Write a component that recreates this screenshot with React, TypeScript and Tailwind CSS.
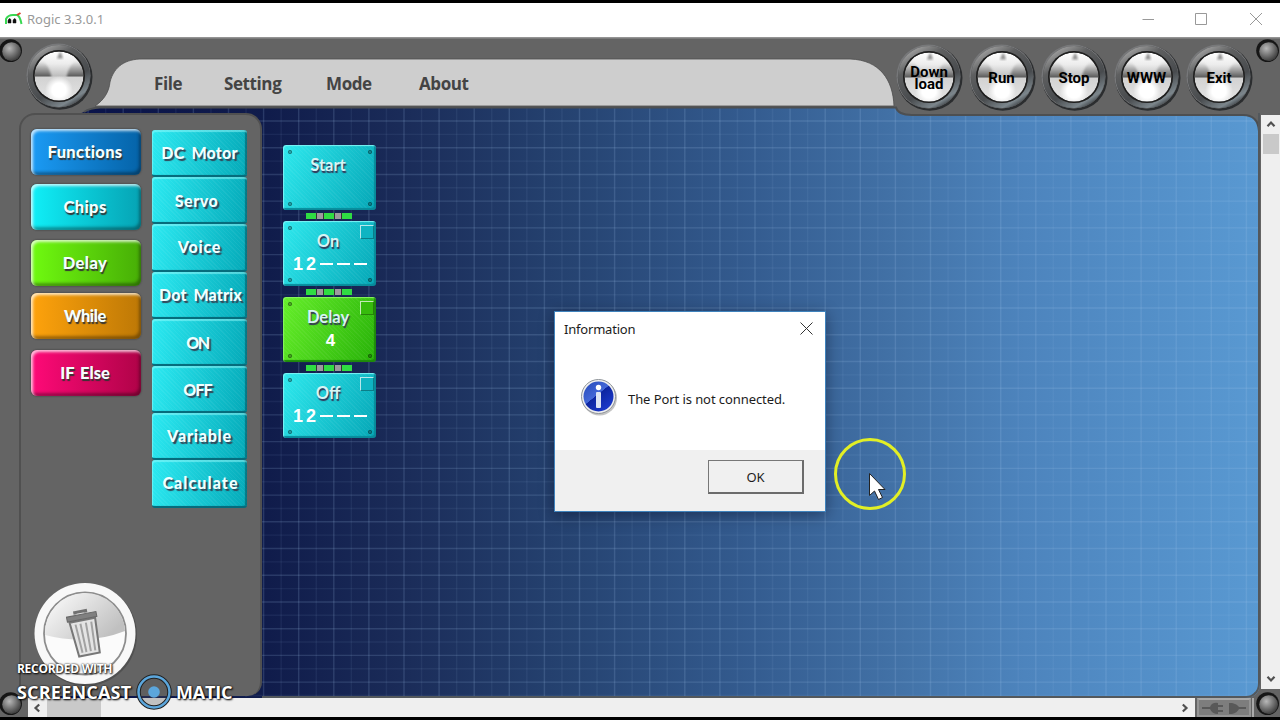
import type { ReactNode } from 'react'
import clsx from 'clsx'

const GROUPS = [
  { label: 'Functions', box: 'from-[#1b9bf5] to-[#0563a8] mt-0', text: 'tracking-[0.3px]' },
  { label: 'Chips', box: 'from-[#10f0f8] to-[#06a3b4] mt-[9px]', text: 'tracking-[0.4px]' },
  { label: 'Delay', box: 'from-[#70fb10] to-[#47ae06] mt-[10px]', text: 'tracking-[0.4px]' },
  { label: 'While', box: 'from-[#ffa30c] to-[#bd7806] mt-[7px]', text: 'tracking-[-0.4px]' },
  { label: 'IF Else', box: 'from-[#ff0a78] to-[#b00348] mt-[11px]', text: 'tracking-[0px] [word-spacing:2px]' },
]

const CHIPS = [
  { label: 'DC Motor', text: 'tracking-[0.2px] [word-spacing:3px]' },
  { label: 'Servo', text: 'tracking-[0.5px] -left-[3px] top-[1px]' },
  { label: 'Voice', text: 'tracking-[0.8px]' },
  { label: 'Dot Matrix', text: 'tracking-[0.1px] [word-spacing:3px] left-[1px]' },
  { label: 'ON', text: '-left-[2px] tracking-[-1.5px] top-[1px]' },
  { label: 'OFF', text: '-left-[2px] tracking-[-0.8px] top-[1px]' },
  { label: 'Variable', text: 'tracking-[0.8px]' },
  { label: 'Calculate', text: 'tracking-[1.1px] left-[1px]' },
]

type Block = { label: string; value?: string; green?: boolean; corner?: boolean }

const BLOCKS: Block[] = [
  { label: 'Start' },
  { label: 'On', value: '12---', corner: true },
  { label: 'Delay', value: '4', green: true, corner: true },
  { label: 'Off', value: '12---', corner: true },
]

const MENU = [
  { label: 'File', cls: 'w-[29px]' },
  { label: 'Setting', cls: 'ml-[41px] w-[57px]' },
  { label: 'Mode', cls: 'ml-[45px] w-[46px]' },
  { label: 'About', cls: 'ml-[47px] w-[50px]' },
]

function Gradients() {
  return (
    <svg className="absolute h-0 w-0">
      <defs>
        <linearGradient id="ring" x1="0.2" y1="0" x2="0.8" y2="1">
          <stop offset="0" stopColor="#a2a2a2" />
          <stop offset="0.25" stopColor="#5e5f60" />
          <stop offset="0.65" stopColor="#484b4e" />
          <stop offset="0.9" stopColor="#7c868c" />
          <stop offset="1" stopColor="#3a3e42" />
        </linearGradient>
        <linearGradient id="chrome" x1="0" y1="0" x2="0" y2="1">
          <stop offset="0" stopColor="#fff" />
          <stop offset="0.25" stopColor="#ececec" />
          <stop offset="0.5" stopColor="#bdbdbd" />
          <stop offset="0.52" stopColor="#d2d2d2" />
          <stop offset="1" stopColor="#e4e4e4" />
        </linearGradient>
        <linearGradient id="dark" x1="0" y1="0" x2="0" y2="1">
          <stop offset="0" stopColor="#888" stopOpacity="0" />
          <stop offset="0.35" stopColor="#777" stopOpacity="0.5" />
          <stop offset="0.75" stopColor="#444" stopOpacity="0.85" />
          <stop offset="1" stopColor="#666" stopOpacity="0.7" />
        </linearGradient>
        <radialGradient id="shine">
          <stop offset="0.5" stopColor="#fff" />
          <stop offset="1" stopColor="#fff" stopOpacity="0" />
        </radialGradient>
        <radialGradient id="rivet" cx="0.38" cy="0.33" r="0.7">
          <stop offset="0" stopColor="#b8b8b8" />
          <stop offset="0.6" stopColor="#6c6c6c" />
          <stop offset="1" stopColor="#3a3a3a" />
        </radialGradient>
        <filter id="soft">
          <feGaussianBlur stdDeviation="1.3" />
        </filter>
        <clipPath id="lens">
          <circle cx="34" cy="34" r="24.5" />
        </clipPath>
        <clipPath id="lensTop">
          <rect x="8" y="8" width="52" height="26.5" />
        </clipPath>
      </defs>
    </svg>
  )
}

function RoundButton({ children }: { children?: ReactNode }) {
  return (
    <button className="relative grid h-[68px] w-[68px] place-items-center">
      <svg className="absolute inset-0" width="68" height="68" viewBox="0 0 68 68">
        <circle cx="34.7" cy="35" r="32.8" fill="#2b2d2f" />
        <circle cx="33.5" cy="33.5" r="32" fill="#77787a" />
        <circle cx="34" cy="34.2" r="31.2" fill="#4c4d4e" />
        <circle cx="34" cy="34" r="28.5" fill="none" stroke="url(#ring)" strokeWidth="5" />
        <circle cx="34" cy="34" r="26" fill="#1f1f1f" />
        <g clipPath="url(#lens)">
          <circle cx="34" cy="34" r="24.5" fill="url(#chrome)" />
          <g clipPath="url(#lensTop)">
            <g filter="url(#soft)">
              <path d="M6 20Q16 17 20 21Q26 27 27 40H6Z" fill="url(#dark)" />
              <path d="M62 20Q52 17 48 21Q42 27 41 40H62Z" fill="url(#dark)" />
            </g>
            <path d="M34.500 10.500h1.500l2 6h-6z" fill="#666" opacity="0.7" filter="url(#soft)" />
          </g>
          <circle cx="34" cy="48" r="14" fill="url(#shine)" />
        </g>
      </svg>
      <span className="relative pt-px text-center font-['Roboto'] text-[15px] leading-[12px] font-bold text-black">
        {children}
      </span>
    </button>
  )
}

function Rivet({ className }: { className?: string }) {
  return (
    <svg className={clsx('shrink-0', className)} width="24" height="24" viewBox="0 0 24 24">
      <circle cx="11.6" cy="11.6" r="11.4" fill="#161616" />
      <circle cx="12.6" cy="12.6" r="9.4" fill="url(#rivet)" />
    </svg>
  )
}

// Blueprint background: minor lines at half of every major cell
function Blueprint() {
  const xs = Array.from({ length: 67 }, (_, i) => 88.1 + i * 17.55)
  const ys = Array.from({ length: 44 }, (_, i) => 121 + i * 13.36)
  return (
    <svg className="absolute inset-0" width="1280" height="680" viewBox="0 37 1280 680">
      <defs>
        <linearGradient id="sea" gradientUnits="userSpaceOnUse" x1="80" y1="0" x2="1260" y2="0">
          <stop offset="0" stopColor="#0a134a" />
          <stop offset="0.16" stopColor="#101c4b" />
          <stop offset="0.27" stopColor="#1a2b58" />
          <stop offset="0.41" stopColor="#254270" />
          <stop offset="0.57" stopColor="#345c90" />
          <stop offset="0.7" stopColor="#4373a8" />
          <stop offset="0.8" stopColor="#4d84bd" />
          <stop offset="1" stopColor="#5999d2" />
        </linearGradient>
      </defs>
      <rect x="60" y="100" width="1200" height="598" fill="url(#sea)" />
      <g stroke="#a5c8ee" strokeWidth="1.4">
        {xs.map((x, i) => (
          <line key={x} x1={x} x2={x} y1="107" y2="697" opacity={i % 2 === 0 ? 0.17 : 0.07} />
        ))}
        {ys.map((y, i) => (
          <line key={y} x1="80" x2="1258" y1={y} y2={y} opacity={i % 2 === 0 ? 0.17 : 0.07} />
        ))}
      </g>
    </svg>
  )
}

function Header() {
  return (
    <header className="relative flex h-[78px] shrink-0">
      <svg className="absolute inset-0" width="1280" height="94" viewBox="0 37 1280 94">
        <path
          d="M0 37H1280V131H1259Q1258 115 1243 115H912Q898 115 896 107.500H100Q90 108 84 112Q76 116 60 116H0Z"
          fill="#646464"
        />
        <path d="M1259 131Q1258 115 1243 115H912Q898 115 896 107.500H100Q90 108 84 112" fill="none" stroke="#4d4f51" strokeWidth="2" />
        <path
          d="M95 106C104 100 109 92 110 82C114 66 126 59 142 59H850C880 60 893 80 894 106Z"
          fill="#cecece"
          stroke="#4f4f4f"
          strokeWidth="0.800"
        />
        <path d="M0 37.500H1280" stroke="#949494" strokeWidth="2" />
      </svg>
      <Rivet className="relative mt-[2px] -ml-px" />
      <div className="relative mt-[5px] ml-[2px]">
        <RoundButton />
      </div>
      <nav className="relative mt-[34px] ml-[61px] flex flex-1 font-['Open_Sans'] text-[17px] leading-[26px] font-bold text-[#444]">
        {MENU.map((item) => (
          <a key={item.label} className={clsx('whitespace-nowrap tracking-[-0.4px]', item.cls)}>
            {item.label}
          </a>
        ))}
      </nav>
      <div className="relative mt-[6px] flex gap-[4.500px]">
        <RoundButton>
          Down
          <br />
          load
        </RoundButton>
        <RoundButton>Run</RoundButton>
        <RoundButton>Stop</RoundButton>
        <RoundButton>WWW</RoundButton>
        <RoundButton>Exit</RoundButton>
      </div>
      <Rivet className="relative mt-[2px] ml-[3px]" />
    </header>
  )
}

function Palette() {
  return (
    <aside className="relative ml-[19px] flex h-[583px] w-[243px] shrink-0 rounded-t-[16px] rounded-br-[14px] border-2 border-b-0 border-[#505050] bg-[#646464] pt-[14px] pl-[10px]">
      <div className="w-[110px]">
        {GROUPS.map((g) => (
          <button
            key={g.label}
            className={clsx(
              'flex h-[46px] w-full items-center justify-center rounded-[6px] bg-gradient-to-r pr-[2px] shadow-[inset_2px_2px_3px_rgba(255,255,255,0.75),inset_-2px_-3px_3px_rgba(0,0,0,0.35),0_0_2px_#333]',
              g.box,
            )}
          >
            <span className={clsx("font-['Lato'] text-[16.500px] font-black whitespace-nowrap text-[#f4ffff] [text-shadow:1px_2px_1px_#333]", g.text)}>
              {g.label}
            </span>
          </button>
        ))}
      </div>
      <div className="mt-[1px] ml-[11px] w-[95px]">
        {CHIPS.map((c) => (
          <button
            key={c.label}
            className="flex h-[47.200px] w-full items-center justify-center rounded-[3px] border-b-2 border-[#066c7c] bg-[repeating-linear-gradient(45deg,rgba(255,255,255,0.05)_0_1px,transparent_1px_3px),linear-gradient(100deg,#2ceaf2,#04a9b8)] pt-px shadow-[inset_1px_2px_1px_rgba(160,255,255,0.5),inset_-2px_0_1px_rgba(0,70,80,0.5)]"
          >
            <span className={clsx("relative font-['Lato'] text-[16px] font-black whitespace-nowrap text-[#f0ffff] [text-shadow:2px_2px_1px_#345]", c.text)}>
              {c.label}
            </span>
          </button>
        ))}
      </div>
      <TrashCan />
      <Watermark />
    </aside>
  )
}

function TrashCan() {
  return (
    <svg className="absolute top-[467px] left-[12px]" width="106" height="106" viewBox="0 0 106 106">
      <defs>
        <linearGradient id="lid" x1="0" y1="0" x2="1" y2="0.6">
          <stop offset="0" stopColor="#fff" />
          <stop offset="1" stopColor="#c0c0c0" />
        </linearGradient>
      </defs>
      <circle cx="53" cy="53" r="51" fill="#444" opacity="0.6" />
      <circle cx="52" cy="51.500" r="50.500" fill="#f8f8f8" />
      <circle cx="52" cy="51.500" r="41" fill="#fbfbfb" stroke="#8d8d8d" strokeWidth="1.800" />
      <path d="M12 53A40 40 0 0 1 92 49Q54 64 12 53Z" fill="url(#lid)" />
      <g transform="rotate(-11 52 52)">
        <path d="M39 38H65L63 73H42Z" fill="#e4e4e4" stroke="#777" strokeWidth="2" />
        <path d="M44.500 41L46 70M49.500 41L50 70M55 41L54.500 70M60.500 41L59 70" stroke="#a2a2a2" strokeWidth="2" />
        <path d="M37 32H67V37H37Z" fill="#808080" stroke="#666" />
        <path d="M46 31V29H57V31" fill="none" stroke="#707070" strokeWidth="3" />
      </g>
    </svg>
  )
}

function Watermark() {
  return (
    <div className="absolute top-[547px] -left-[4px] z-20 font-['Open_Sans'] font-bold whitespace-nowrap text-white [text-shadow:1px_1px_2px_#000,0_0_2px_#000]">
      <div className="text-[12px] leading-[14px] tracking-[-0.300px]">RECORDED WITH</div>
      <div className="-mt-[2px] flex items-center text-[18px] leading-[34px]">
        <span className="w-[119px] tracking-[0.200px]">SCREENCAST</span>
        <svg width="36" height="36" viewBox="0 0 36 36">
          <circle cx="18" cy="18" r="15.500" fill="#555" fillOpacity="0.3" stroke="#222" strokeWidth="4.500" />
          <circle cx="18" cy="18" r="15.500" fill="none" stroke="#5ba6dc" strokeWidth="2.500" />
          <circle cx="18" cy="18" r="5.800" fill="#5ba6dc" />
        </svg>
        <span className="ml-[4px] tracking-[-0.200px]">MATIC</span>
      </div>
    </div>
  )
}

function Link() {
  return (
    <div className="ml-[23px] flex h-[11px] items-center">
      {[1, 0, 1, 0, 1].map((on, i) => (
        <span key={i} className={clsx('h-[6px]', on ? 'w-[10px] bg-[#2fdc43]' : 'w-[8px] border-x border-[#333] bg-[#9d9a9f]')} />
      ))}
    </div>
  )
}

function BlockCard({ block }: { block: Block }) {
  return (
    <div
      className={clsx(
        'relative h-[65px] w-[93px] rounded-[3px] text-center text-white',
        block.green
          ? 'bg-[repeating-linear-gradient(45deg,rgba(255,255,255,0.05)_0_1px,transparent_1px_3px),linear-gradient(115deg,#66ef2a,#27b108)] shadow-[inset_1px_1px_1px_#8af860,inset_-2px_-2px_1px_#1e8a0a]'
          : 'bg-[repeating-linear-gradient(45deg,rgba(255,255,255,0.05)_0_1px,transparent_1px_3px),linear-gradient(115deg,#2ee9ee,#05a6b6)] shadow-[inset_1px_1px_1px_#7df4f6,inset_-2px_-2px_1px_#088a9a]',
      )}
    >
      {['top-[5px] left-[5px]', 'top-[5px] right-[4px]', 'bottom-[4px] left-[5px]', 'bottom-[4px] right-[4px]'].map((pos) => (
        <i key={pos} className={clsx('absolute h-1 w-1 rounded-full border border-black/40 bg-black/20', pos)} />
      ))}
      {block.corner && (
        <i
          className={clsx(
            'absolute top-[4px] right-[2px] h-[14px] w-[14px] border border-t-white/70 border-r-black/30 border-b-black/30 border-l-white/70',
            block.green ? 'bg-[#36bb0c]' : 'bg-[#0fb4c2]',
          )}
        />
      )}
      <div className="pt-[9px] pr-[3px] font-['Lato'] text-[16.500px] leading-[22px] font-bold text-[#d8f4f4] [text-shadow:1px_2px_1px_#335]">
        {block.label}
      </div>
      {block.value === '4' && <div className="ml-[2px] font-['Liberation_Sans'] text-[17px] leading-[25px] font-bold">4</div>}
      {block.value === '12---' && (
        <div className="flex items-center pl-[10px] font-['Liberation_Sans'] text-[18px] leading-[24px] font-bold">
          <span className="w-[13px] text-left">1</span>
          <span className="w-[14px] text-left">2</span>
          {[0, 1, 2].map((n) => (
            <span key={n} className="mr-[4px] h-[1.500px] w-[13px] bg-white" />
          ))}
        </div>
      )}
    </div>
  )
}

function Chevron({ className }: { className?: string }) {
  return (
    <svg className={className} width="10" height="8" viewBox="0 0 10 8" fill="none" stroke="#505050" strokeWidth="2.200">
      <path d="M1.500 6.200L5 2.500L8.500 6.200" />
    </svg>
  )
}

function InfoDialog() {
  return (
    <section
      role="dialog"
      className="absolute top-[274px] left-[554px] z-10 flex h-[201px] w-[272px] flex-col border border-[#3f83bd] bg-white font-['Noto_Sans'] text-[13px] text-[#1c1c1c] shadow-[0_3px_14px_rgba(0,0,20,0.4)]"
    >
      <div className="flex h-[33px] items-center justify-between pr-[12px] pl-[9px]">
        <span className="pt-[2px] text-[13px] tracking-[-0.200px]">Information</span>
        <svg width="13" height="13" viewBox="0 0 13 13" stroke="#333" strokeWidth="1">
          <path d="M0.500 0.500L12.500 12.500M12.500 0.500L0.500 12.500" />
        </svg>
      </div>
      <div className="flex flex-1 items-center pl-[25px]">
        <svg className="-mt-[2px]" width="38" height="38" viewBox="0 0 38 38">
          <defs>
            <linearGradient id="info" x1="0" y1="0" x2="0.8" y2="1">
              <stop offset="0" stopColor="#2448b8" />
              <stop offset="0.490" stopColor="#4468d8" />
              <stop offset="0.500" stopColor="#0d25a0" />
              <stop offset="1" stopColor="#1c3cd0" />
            </linearGradient>
          </defs>
          <circle cx="19.500" cy="20" r="17.500" fill="#8a8a8a" opacity="0.500" />
          <circle cx="18.500" cy="18.500" r="17" fill="#f0f0f0" stroke="#8f9499" />
          <circle cx="18.500" cy="18.500" r="15" fill="url(#info)" />
          <circle cx="18.500" cy="9.500" r="2.700" fill="#fff" />
          <rect x="16" y="14" width="5" height="16" rx="1" fill="#dce4f4" />
        </svg>
        <span className="ml-[10px] pt-[5px] text-[13px] tracking-[-0.080px] whitespace-nowrap">The Port is not connected.</span>
      </div>
      <div className="flex h-[61px] justify-end bg-[#f0f0f0] pt-[10px] pr-[21px]">
        <button className="h-[34px] w-[96px] border border-t-[#777] border-l-[#777] border-r-2 border-b-2 border-[#6b6b6b] bg-[#f0f0f0] pt-[2px] text-[13px]">OK</button>
      </div>
    </section>
  )
}

function Pointer() {
  return (
    <div className="absolute top-[400px] left-[833px] z-20 h-[74px] w-[74px]">
      <svg width="74" height="74" viewBox="0 0 74 74">
        <circle cx="37" cy="37" r="34.500" fill="none" stroke="#e2ef25" strokeWidth="3" />
        <path d="M36.500 36.500V58.500L41.500 54L45.500 62.500L49.500 60.500L45.500 52.500H52Z" fill="#fff" stroke="#222" strokeWidth="1" />
      </svg>
    </div>
  )
}

export default function App() {
  return (
    <div className="relative flex h-[720px] w-[1280px] flex-col overflow-hidden border-y-[3px] border-black bg-[#646464]">
      <Gradients />
      <div className="flex h-[34px] shrink-0 items-center bg-white pl-[5px]">
        <svg className="-mt-[3px]" width="18" height="14" viewBox="0 0 18 14">
          <path d="M1 12V7Q3 3 8 3H12Q15 4 16.500 12" fill="none" stroke="#39d852" strokeWidth="2" />
          <path d="M3 8.500Q4.500 5 6 8V11H3ZM8 8.500Q9.500 5 11 8V11H8Z" fill="#111" stroke="#111" strokeWidth="0.500" />
          <path d="M12 3L15.500 1" stroke="#d5432f" strokeWidth="2" />
        </svg>
        <span className="ml-[4px] flex-1 font-['Noto_Sans'] text-[13px] text-[#999]">Rogic 3.3.0.1</span>
        <svg className="mr-[17px] -mt-[3px]" width="122" height="14" viewBox="0 0 122 14" fill="none" stroke="#999">
          <path d="M1.500 7.500H13M54.500 1.500H65.500V12.500H54.500ZM109 1L121 13M121 1L109 13" />
        </svg>
      </div>
      <div className="relative flex flex-1 flex-col">
        <Blueprint />
        <Header />
        <div className="relative -mt-[2px] flex h-[585px] shrink-0">
          <div className="absolute inset-y-0 left-0 w-5 bg-[#646464]" />
          <Palette />
          <main className="relative flex-1 rounded-br-[14px] border-r-2 border-b-2 border-[#53585c]">
            <div className="absolute top-[32px] left-[21px]">
              {BLOCKS.map((b, i) => (
                <div key={b.label}>
                  {i > 0 && <Link />}
                  <BlockCard block={b} />
                </div>
              ))}
            </div>
            <svg className="absolute -right-[2px] -bottom-[2px]" width="16" height="16" viewBox="0 0 16 16">
              <path d="M16 0V16H0Q16 16 16 0Z" fill="#646464" />
            </svg>
          </main>
          <div className="flex w-[20px] flex-col bg-[#646464]">
            <div className="mt-[2px] ml-[1px] flex h-[574px] flex-col items-center bg-[#efefef]">
              <Chevron className="mt-[5px]" />
              <div className="mt-[6px] h-[20px] w-[16px] bg-[#c9c9c9]" />
              <Chevron className="mt-auto mb-[6px] rotate-180" />
            </div>
          </div>
        </div>
        <div className="relative flex flex-1 bg-[#646464]">
          <Rivet className="-mt-[6px] -ml-px" />
          <div className="ml-[5px] flex h-full w-[1167px] items-center bg-[#efefef]">
            <Chevron className="ml-[4px] -rotate-90" />
            <div className="ml-[5px] h-full w-[54px] bg-[#c9c9c9]" />
            <Chevron className="mr-[5px] ml-auto rotate-90" />
          </div>
          <div className="ml-[2px] grid w-[54px] place-items-center border-2 border-[#949494] border-t-[#aaa] bg-[#7d7d7d]">
            <svg width="46" height="14" viewBox="0 0 46 14" fill="#585858">
              <path d="M1 6H9Q11 1 17 2V4H22V6H17V9H22V11H17V13Q11 13 9 8H1ZM28 2H31Q36 3 38 6H45V8H38Q36 12 31 13H28Z" />
            </svg>
          </div>
          <div className="ml-[1px] w-[2px] bg-[#aaa]" />
          <Rivet className="-mt-[6px] ml-[2px]" />
        </div>
        <InfoDialog />
        <Pointer />
      </div>
    </div>
  )
}
